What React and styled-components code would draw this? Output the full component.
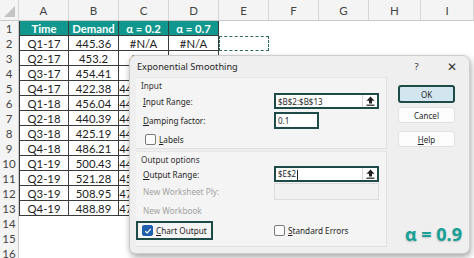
import React from "react";
import styled, { createGlobalStyle } from "styled-components";

const GlobalStyle = createGlobalStyle`
  html, body {
    margin: 0;
    padding: 0;
    background: #ffffff;
    overflow: hidden;
  }
`;

const Page = styled.div`
  position: relative;
  width: 474px;
  height: 258px;
  overflow: hidden;
  background: #ffffff;
`;

const Sheet = styled.div`
  display: grid;
  grid-template-columns: 19px 50px 50px 50px 50px 50px 50px 50px 52px 53px;
  grid-template-rows: 21px repeat(16, 15px);
  font-family: Lato, "Liberation Sans", sans-serif;
  font-size: 11.3px;
  color: #222;
`;

const ColHead = styled.div`
  background: #f4f4f4;
  border-right: 1px solid #d6d6d6;
  border-bottom: 1px solid #c9c9c9;
  display: flex;
  align-items: center;
  justify-content: center;
  color: #444;
  font-size: 11.5px;
  position: relative;
`;

const Corner = styled(ColHead)`
  &::after {
    content: "";
    position: absolute;
    right: 3px;
    bottom: 3px;
    border-left: 11px solid transparent;
    border-bottom: 11px solid #c4c4c4;
  }
`;

const RowHead = styled.div`
  background: #f4f4f4;
  border-right: 1px solid #c9c9c9;
  display: flex;
  align-items: center;
  justify-content: center;
  color: #444;
  font-size: 11.5px;
`;

const Cell = styled.div`
  box-sizing: border-box;
  display: flex;
  align-items: center;
  justify-content: center;
  white-space: nowrap;
  overflow: visible;
  background: ${(p) => (p.$head ? "#12978f" : "#ffffff")};
  color: ${(p) => (p.$head ? "#ffffff" : "#222")};
  font-weight: ${(p) => (p.$head ? 700 : 400)};
  border-right: ${(p) => (p.$table ? "1px solid #3a3a3a" : "none")};
  border-bottom: ${(p) => (p.$table ? "1px solid #3a3a3a" : "none")};
  border-left: ${(p) => (p.$first ? "1px solid #3a3a3a" : "none")};
  ${(p) => p.$marquee && "border: 1.5px dashed #2d6b5c;"}
`;

const Dialog = styled.div`
  position: absolute;
  left: 129px;
  top: 55px;
  width: 341px;
  height: 199px;
  box-sizing: border-box;
  background: #efefef;
  border: 1px solid #cdcdcd;
  border-radius: 7px;
  box-shadow: 1px 3px 6px rgba(0, 0, 0, 0.35);
  font-family: "Noto Sans", "Open Sans", sans-serif;
  font-size: 8.2px;
  color: #1f1f1f;
  display: flex;
  flex-direction: column;
`;

const TitleBar = styled.div`
  height: 21px;
  display: flex;
  align-items: center;
  padding: 0 0 0 7px;
  font-size: 9.2px;
`;

const Title = styled.div`
  flex: 1;
`;

const TitleButton = styled.div`
  width: 35px;
  text-align: center;
  font-size: ${(p) => (p.$close ? "12px" : "9.5px")};
  color: #333;
`;

const Body = styled.div`
  display: flex;
  padding-left: 6px;
  gap: 11px;
`;

const Panels = styled.div`
  width: 251px;
  display: flex;
  flex-direction: column;
  gap: 2px;
`;

const Panel = styled.div`
  box-sizing: border-box;
  height: ${(p) => p.$h}px;
  background: #f4f4f4;
  border-right: 1px solid #e0e0e0;
  border-bottom: 1px solid #e0e0e0;
  border-top: 1px solid #e6e6e6;
  padding: 1px 0 0 5px;
  display: flex;
  flex-direction: column;
`;

const GroupLabel = styled.div`
  height: 13px;
  line-height: 13px;
  color: #333;
`;

const FieldRow = styled.div`
  display: grid;
  grid-template-columns: 131px auto;
  align-items: center;
  height: ${(p) => p.$h}px;
  margin-top: ${(p) => p.$mt || 0}px;
  padding-left: 2px;
`;

const Label = styled.div`
  color: ${(p) => (p.$disabled ? "#a2a2a2" : "#1f1f1f")};
  white-space: nowrap;
`;

const RefBox = styled.div`
  box-sizing: border-box;
  width: ${(p) => p.$w}px;
  height: ${(p) => p.$h || 16}px;
  background: ${(p) => (p.$disabled ? "#f1f1f1" : "#ffffff")};
  border: ${(p) =>
    p.$disabled ? "1px solid #dcdcdc" : "2px solid #1d4b47"};
  display: flex;
  align-items: center;
  font-size: 8px;
  padding-left: 2px;
`;

const RefText = styled.div`
  flex: 1;
`;

const Collapse = styled.div`
  width: 14px;
  height: 100%;
  border-left: 1px solid #d8d8d8;
  display: flex;
  align-items: center;
  justify-content: center;
`;

const Caret = styled.span`
  display: inline-block;
  width: 1px;
  height: 10px;
  background: #222;
  margin-left: 1px;
  vertical-align: middle;
`;

const CheckRow = styled.div`
  display: grid;
  grid-template-columns: 131px auto;
  align-items: center;
  margin-top: ${(p) => p.$mt || 0}px;
  padding-left: 2px;
`;

const CheckWrap = styled.div`
  box-sizing: border-box;
  display: flex;
  align-items: center;
  justify-self: start;
  gap: 3px;
  height: 19px;
  padding: 0 4px 0 4px;
  border: 2px solid ${(p) => (p.$focus ? "#1d4b47" : "transparent")};
  margin-left: ${(p) => p.$ml || 0}px;
`;

const Box = styled.div`
  box-sizing: border-box;
  width: 11px;
  height: 11px;
  border-radius: 2px;
  border: 1px solid ${(p) => (p.$checked ? "#1f5fae" : "#7a7a7a")};
  background: ${(p) => (p.$checked ? "#1f5fae" : "#fbfbfb")};
  display: flex;
  align-items: center;
  justify-content: center;
`;

const Buttons = styled.div`
  display: flex;
  flex-direction: column;
  width: 57px;
  padding-top: 8px;
  gap: 4px;
`;

const Button = styled.div`
  box-sizing: border-box;
  height: ${(p) => (p.$default ? 18 : 16)}px;
  margin-top: ${(p) => p.$mt || 0}px;
  background: ${(p) => (p.$default ? "#d3e5ef" : "#fdfdfd")};
  border: ${(p) => (p.$default ? "2px solid #1d4b47" : "1px solid #e0e0e0")};
  border-radius: 3px;
  display: flex;
  align-items: center;
  justify-content: center;
  font-size: 8px;
`;

const Alpha = styled.div`
  position: absolute;
  right: 7px;
  bottom: 7px;
  font-family: "Open Sans", "Noto Sans", sans-serif;
  font-weight: 700;
  font-size: 18px;
  color: #17a096;
  text-shadow: 0 1px 2px rgba(0, 0, 0, 0.2);
`;

const letters = ["A", "B", "C", "D", "E", "F", "G", "H", "I"];

const data = [
  ["Time", "Demand", "α = 0.2", "α = 0.7"],
  ["Q1-17", "445.36", "#N/A", "#N/A"],
  ["Q2-17", "453.2", "445.4", "445.4"],
  ["Q3-17", "454.41", "446.9", "450.9"],
  ["Q4-17", "422.38", "448.4262", "453.3425"],
  ["Q1-18", "456.04", "443.2170", "431.6688"],
  ["Q2-18", "440.39", "445.7816", "448.7286"],
  ["Q3-18", "425.19", "444.7033", "442.8916"],
  ["Q4-18", "486.21", "440.8006", "430.5005"],
  ["Q1-19", "500.43", "449.8825", "469.4972"],
  ["Q2-19", "521.28", "459.9920", "491.1502"],
  ["Q3-19", "508.95", "472.2496", "512.2410"],
  ["Q4-19", "488.89", "479.5897", "509.9373"],
];

const UploadIcon = () => (
  <svg width="9" height="10" viewBox="0 0 9 10">
    <path d="M4.5 0.5 L8.5 4.8 H6 V7.5 H3 V4.8 H0.5 Z" fill="#222" />
    <rect x="0.5" y="8.6" width="8" height="1.2" fill="#222" />
  </svg>
);

const Tick = () => (
  <svg width="8" height="8" viewBox="0 0 8 8">
    <path d="M1.2 4.2 L3.2 6 L6.8 1.8" stroke="#fff" strokeWidth="1.2" fill="none" />
  </svg>
);

export default function App() {
  const rows = [];
  for (let r = 1; r <= 16; r++) {
    const row = data[r - 1];
    rows.push(<RowHead key={`rh${r}`}>{r}</RowHead>);
    letters.forEach((l, c) => {
      const inTable = row && c < 4;
      rows.push(
        <Cell
          key={`${l}${r}`}
          $table={inTable}
          $first={inTable && c === 0}
          $head={r === 1 && c < 4}
          $marquee={r === 2 && l === "E"}
        >
          {inTable ? row[c] : ""}
        </Cell>
      );
    });
  }

  return (
    <Page>
      <GlobalStyle />
      <Sheet>
        <Corner />
        {letters.map((l) => (
          <ColHead key={l}>{l}</ColHead>
        ))}
        {rows}
      </Sheet>

      <Dialog>
        <TitleBar>
          <Title>Exponential Smoothing</Title>
          <TitleButton>?</TitleButton>
          <TitleButton $close>✕</TitleButton>
        </TitleBar>
        <Body>
          <Panels>
            <Panel $h={72}>
              <GroupLabel>Input</GroupLabel>
              <FieldRow $h={16} $mt={1}>
                <Label>
                  <u>I</u>nput Range:
                </Label>
                <RefBox $w={105}>
                  <RefText>$B$2:$B$13</RefText>
                  <Collapse>
                    <UploadIcon />
                  </Collapse>
                </RefBox>
              </FieldRow>
              <FieldRow $h={17} $mt={3}>
                <Label>
                  <u>D</u>amping factor:
                </Label>
                <RefBox $w={45} $h={17}>
                  <RefText>0.1</RefText>
                </RefBox>
              </FieldRow>
              <CheckRow $mt={1}>
                <CheckWrap $ml={-4}>
                  <Box />
                  <Label>
                    <u>L</u>abels
                  </Label>
                </CheckWrap>
              </CheckRow>
            </Panel>
            <Panel $h={96}>
              <GroupLabel>Output options</GroupLabel>
              <FieldRow $h={16} $mt={0}>
                <Label>
                  <u>O</u>utput Range:
                </Label>
                <RefBox $w={105}>
                  <RefText>
                    $E$2
                    <Caret />
                  </RefText>
                  <Collapse>
                    <UploadIcon />
                  </Collapse>
                </RefBox>
              </FieldRow>
              <FieldRow $h={17} $mt={1}>
                <Label $disabled>New Worksheet Ply:</Label>
                <RefBox $w={105} $h={17} $disabled />
              </FieldRow>
              <FieldRow $h={20}>
                <Label $disabled>New Workbook</Label>
              </FieldRow>
              <CheckRow $mt={1}>
                <CheckWrap $focus $ml={-7}>
                  <Box $checked>
                    <Tick />
                  </Box>
                  <Label>
                    <u>C</u>hart Output
                  </Label>
                </CheckWrap>
                <CheckWrap $ml={-6}>
                  <Box />
                  <Label>
                    <u>S</u>tandard Errors
                  </Label>
                </CheckWrap>
              </CheckRow>
            </Panel>
          </Panels>
          <Buttons>
            <Button $default>OK</Button>
            <Button>Cancel</Button>
            <Button $mt={4}>
              <u>H</u>elp
            </Button>
          </Buttons>
        </Body>
        <Alpha>α = 0.9</Alpha>
      </Dialog>
    </Page>
  );
}
